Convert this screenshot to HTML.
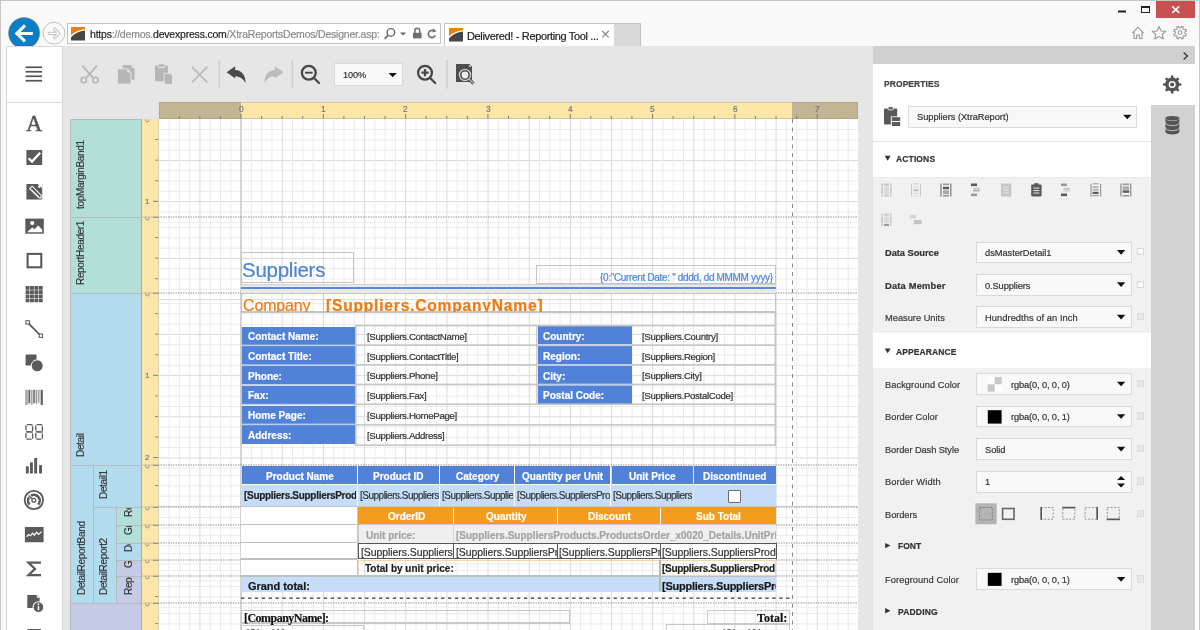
<!DOCTYPE html><html><head><meta charset="utf-8"><style>
*{margin:0;padding:0;box-sizing:border-box}
html,body{width:1200px;height:630px;overflow:hidden}
body{position:relative;background:#f9f9f9;font-family:"Liberation Sans",sans-serif;color:#333}
.a{position:absolute}
.t{white-space:pre;will-change:transform;-webkit-text-stroke:0.2px currentColor}
svg{position:absolute;overflow:visible}
</style></head><body>
<div class="a" style="left:0px;top:0px;width:1200px;height:1px;background:#c6c6c6;"></div>
<div class="a" style="left:0px;top:0px;width:1px;height:630px;background:#c6c6c6;"></div>
<div class="a" style="left:1156px;top:1px;width:39px;height:17px;background:#c75050;"></div>
<svg width="1200" height="50" style="left:0;top:0"><path d="M1172.3,6.3 L1179.2,12.9 M1179.2,6.3 L1172.3,12.9" stroke="#fff" stroke-width="1.6"/><rect x="1118" y="10.5" width="8" height="2" fill="#222"/><rect x="1141.5" y="6.5" width="8" height="6" fill="none" stroke="#222" stroke-width="1"/><rect x="1141" y="6" width="9" height="2" fill="#222"/><path d="M1132.5,33 L1138,27.2 L1143.5,33 M1134,31.8 V38.5 H1136.6 V35 H1139.4 V38.5 H1142 V31.8" fill="none" stroke="#9a9a9a" stroke-width="1.1"/><path d="M1159,26.6 L1161,31 L1165.8,31.4 L1162.2,34.5 L1163.3,39 L1159,36.6 L1154.7,39 L1155.8,34.5 L1152.2,31.4 L1157,31 Z" fill="none" stroke="#9a9a9a" stroke-width="1.1" stroke-linejoin="round"/><circle cx="1180.1" cy="32.6" r="1.9" fill="none" stroke="#9a9a9a" stroke-width="1.1"/><path d="M1184.70,32.60 L1185.02,33.51 L1186.52,34.14 L1185.73,36.05 L1184.22,35.43 L1183.35,35.85 L1183.35,35.85 L1182.93,36.72 L1183.55,38.23 L1181.64,39.02 L1181.01,37.52 L1180.10,37.20 L1180.10,37.20 L1179.19,37.52 L1178.56,39.02 L1176.65,38.23 L1177.27,36.72 L1176.85,35.85 L1176.85,35.85 L1175.98,35.43 L1174.47,36.05 L1173.68,34.14 L1175.18,33.51 L1175.50,32.60 L1175.50,32.60 L1175.18,31.69 L1173.68,31.06 L1174.47,29.15 L1175.98,29.77 L1176.85,29.35 L1176.85,29.35 L1177.27,28.48 L1176.65,26.97 L1178.56,26.18 L1179.19,27.68 L1180.10,28.00 L1180.10,28.00 L1181.01,27.68 L1181.64,26.18 L1183.55,26.97 L1182.93,28.48 L1183.35,29.35 L1183.35,29.35 L1184.22,29.77 L1185.73,29.15 L1186.52,31.06 L1185.02,31.69 L1184.70,32.60 Z" fill="none" stroke="#9a9a9a" stroke-width="1.05" stroke-linejoin="round"/><circle cx="24.1" cy="33.1" r="15.7" fill="#0a7fc6" stroke="#b08a70" stroke-width="0.5"/><path d="M16.5,33.4 H32.8 M25,25.4 L16.8,33.4 L25,41.4" fill="none" stroke="#fff" stroke-width="3"/><circle cx="54" cy="33.2" r="10.9" fill="#fbfbfb" stroke="#c2c2c2" stroke-width="1"/><path d="M49.2,33.3 H58.6 M54.6,29 L58.9,33.3 L54.6,37.6" fill="none" stroke="#c2c2c2" stroke-width="3.2" stroke-linecap="round" stroke-linejoin="round"/><path d="M49.2,33.3 H58.6 M54.6,29 L58.9,33.3 L54.6,37.6" fill="none" stroke="#fbfbfb" stroke-width="1.2" stroke-linecap="round" stroke-linejoin="round"/></svg>
<div class="a" style="left:67px;top:23px;width:374px;height:21px;background:#fff;border:1px solid #c3c3c3"></div>
<svg width="14" height="14" style="left:71px;top:26.5px" viewBox="0 0 14 14"><path d="M0,0 H14 V2.3 Q5,3.3 0,8.3 Z" fill="#f07d16"/><path d="M0,13.4 V10.2 Q5,4.6 14,3.4 V13.4 Z" fill="#474747"/></svg>
<span class="a t" style="left:89.70px;top:29.21px;font-family:'Liberation Sans',sans-serif;font-size:10.5px;line-height:10.5px;font-weight:normal;color:#222;letter-spacing:-0.207px;"><span style="color:#1e1e1e">https</span><span style="color:#8a8a8a">://demos.</span><span style="color:#1e1e1e">devexpress.com</span><span style="color:#8a8a8a">/XtraReportsDemos/Designer.asp:</span></span>
<svg width="1200" height="50" style="left:0;top:0"><circle cx="390.9" cy="32.4" r="3.8" fill="none" stroke="#6a6a6a" stroke-width="1.4"/><path d="M388.2,35.2 L384.6,38.8" stroke="#6a6a6a" stroke-width="1.7"/><path d="M400,32.4 H406.2 L403.1,35.5 Z" fill="#6a6a6a"/><rect x="413" y="32.8" width="8.6" height="5.6" fill="#6f6f6f"/><path d="M414.9,33 V30.6 A2.4,2.4 0 0 1 419.7,30.6 V33" fill="none" stroke="#6f6f6f" stroke-width="1.5"/><path d="M434.6,31.6 A3.6,3.6 0 1 0 435.2,35.4" fill="none" stroke="#6f6f6f" stroke-width="1.6"/><path d="M433,28.2 L436.6,31.2 L432.6,32.6 Z" fill="#6f6f6f"/></svg>
<div class="a" style="left:444px;top:23px;width:171px;height:24px;background:#fff;border:1px solid #c3c3c3;border-bottom:none"></div>
<div class="a" style="left:614px;top:23px;width:27px;height:23px;background:#d9d9d9;border:1px solid #c3c3c3;border-bottom:none;border-left:none"></div>
<svg width="14" height="14" style="left:449px;top:27.8px" viewBox="0 0 14 14"><path d="M0,0 H14 V2.3 Q5,3.3 0,8.3 Z" fill="#f07d16"/><path d="M0,13.4 V10.2 Q5,4.6 14,3.4 V13.4 Z" fill="#474747"/></svg>
<span class="a t" style="left:467.00px;top:30.79px;font-family:'Liberation Sans',sans-serif;font-size:11px;line-height:11px;font-weight:normal;color:#222;letter-spacing:-0.347px;">Delivered! - Reporting Tool ...</span>
<svg width="1200" height="50" style="left:0;top:0"><path d="M602.3,31 L608.7,37.4 M608.7,31 L602.3,37.4" stroke="#8a8a8a" stroke-width="1.3"/></svg>
<div class="a" style="left:1px;top:46px;width:6px;height:584px;background:#f8f8f8;"></div>
<div class="a" style="left:6px;top:46px;width:57px;height:584px;background:#fff;border-left:1px solid #d6d6d6;border-top:1px solid #d6d6d6;border-right:1px solid #dadada"></div>
<div class="a" style="left:7px;top:102px;width:55px;height:1px;background:#d9d9d9;"></div>
<div class="a" style="left:63px;top:46px;width:810px;height:584px;background:#e6e6e6;"></div>
<svg width="70" height="630" style="left:0;top:0"><rect x="25.6" y="66.4" width="16.5" height="1.7" fill="#555"/><rect x="25.6" y="70.9" width="16.5" height="1.7" fill="#555"/><rect x="25.6" y="75.4" width="16.5" height="1.7" fill="#555"/><rect x="25.6" y="79.9" width="16.5" height="1.7" fill="#555"/><rect x="26.4" y="149.9" width="15.8" height="15" rx="0.6" fill="#5a5a5a"/><path d="M28.6,158.2 L32,161.6 L40.2,152.8" fill="none" stroke="#fff" stroke-width="2.3"/><rect x="26.4" y="184" width="15.8" height="15.6" rx="0.6" fill="#5a5a5a"/><path d="M29.6,188.6 L32.2,186.2 L41.2,195.4 L41,198 L38.6,197.6 Z" fill="none" stroke="#fff" stroke-width="1.1"/><path d="M31.6,189.6 L39.4,197.2" stroke="#fff" stroke-width="0.8"/><path d="M37.8,184 L42.2,184 L42.2,188.4 Z" fill="#fff"/><circle cx="39.2" cy="186.6" r="1.2" fill="#fff"/><rect x="25.3" y="218.6" width="18.5" height="15.1" fill="#5a5a5a"/><circle cx="32.2" cy="223" r="2.1" fill="#fff"/><path d="M27,232.3 L32.2,227.4 L34.6,229.2 L38.2,225.6 L42.2,229.8 V232.3 Z" fill="#fff"/><rect x="27.6" y="253.9" width="13.7" height="13.4" fill="none" stroke="#555" stroke-width="2"/><rect x="25.6" y="286.0" width="3.9" height="3.7" rx="0.3" fill="#5a5a5a"/><rect x="30.0" y="286.0" width="3.9" height="3.7" rx="0.3" fill="#5a5a5a"/><rect x="34.4" y="286.0" width="3.9" height="3.7" rx="0.3" fill="#5a5a5a"/><rect x="38.8" y="286.0" width="3.9" height="3.7" rx="0.3" fill="#5a5a5a"/><rect x="25.6" y="290.2" width="3.9" height="3.7" rx="0.3" fill="#5a5a5a"/><rect x="30.0" y="290.2" width="3.9" height="3.7" rx="0.3" fill="#5a5a5a"/><rect x="34.4" y="290.2" width="3.9" height="3.7" rx="0.3" fill="#5a5a5a"/><rect x="38.8" y="290.2" width="3.9" height="3.7" rx="0.3" fill="#5a5a5a"/><rect x="25.6" y="294.4" width="3.9" height="3.7" rx="0.3" fill="#5a5a5a"/><rect x="30.0" y="294.4" width="3.9" height="3.7" rx="0.3" fill="#5a5a5a"/><rect x="34.4" y="294.4" width="3.9" height="3.7" rx="0.3" fill="#5a5a5a"/><rect x="38.8" y="294.4" width="3.9" height="3.7" rx="0.3" fill="#5a5a5a"/><rect x="25.6" y="298.6" width="3.9" height="3.7" rx="0.3" fill="#5a5a5a"/><rect x="30.0" y="298.6" width="3.9" height="3.7" rx="0.3" fill="#5a5a5a"/><rect x="34.4" y="298.6" width="3.9" height="3.7" rx="0.3" fill="#5a5a5a"/><rect x="38.8" y="298.6" width="3.9" height="3.7" rx="0.3" fill="#5a5a5a"/><path d="M27.8,322.6 L40.6,335.6" stroke="#555" stroke-width="1.6"/><rect x="25.9" y="320.7" width="3.4" height="3.4" fill="#fff" stroke="#555" stroke-width="1"/><rect x="39.2" y="334" width="3.4" height="3.4" fill="#fff" stroke="#555" stroke-width="1"/><rect x="25.6" y="354.4" width="11" height="11" rx="0.6" fill="#5a5a5a"/><circle cx="37.2" cy="365.8" r="6" fill="#5a5a5a" stroke="#fff" stroke-width="1"/><rect x="25.2" y="389.8" width="2.6" height="15.2" fill="#a8a8a8"/><rect x="28.4" y="389.8" width="1.9" height="13.5" fill="#666"/><rect x="31" y="389.8" width="1.6" height="15" fill="#a8a8a8"/><rect x="33.2" y="389.8" width="1.7" height="13.5" fill="#777"/><rect x="35.6" y="389.8" width="1.7" height="14" fill="#999"/><rect x="38" y="389.8" width="1.6" height="13" fill="#a8a8a8"/><rect x="40.6" y="389.8" width="2.3" height="15.2" fill="#666"/><rect x="26.0" y="424.6" width="6.6" height="7.2" rx="1.6" fill="none" stroke="#5a5a5a" stroke-width="1.3" stroke-dasharray="5,0.8"/><rect x="26.0" y="431.8" width="6.6" height="7.4" rx="1.6" fill="none" stroke="#5a5a5a" stroke-width="1.3" stroke-dasharray="5,0.8"/><rect x="35.800000000000004" y="424.6" width="6.6" height="7.2" rx="1.6" fill="none" stroke="#5a5a5a" stroke-width="1.3" stroke-dasharray="5,0.8"/><rect x="35.800000000000004" y="431.8" width="6.6" height="7.4" rx="1.6" fill="none" stroke="#5a5a5a" stroke-width="1.3" stroke-dasharray="5,0.8"/><rect x="25.9" y="466.3" width="2.9" height="7.2" rx="0.4" fill="#5a5a5a"/><rect x="30" y="462.2" width="2.9" height="11.3" rx="0.4" fill="#5a5a5a"/><rect x="34.2" y="458" width="2.9" height="15.5" rx="0.4" fill="#5a5a5a"/><rect x="39.1" y="465" width="2.9" height="8.5" rx="0.4" fill="#5a5a5a"/><circle cx="33.9" cy="500" r="9.2" fill="none" stroke="#5a5a5a" stroke-width="1.8"/><path d="M29.6,504.6 A5.8,5.8 0 1 1 38.2,504.6" fill="none" stroke="#5a5a5a" stroke-width="2.6"/><path d="M33.8,500.2 L28.6,495" stroke="#fff" stroke-width="2.6"/><path d="M33.8,500.2 L29,495.4" stroke="#5a5a5a" stroke-width="1.4"/><circle cx="33.8" cy="500.2" r="1.9" fill="#fff" stroke="#5a5a5a" stroke-width="1.3"/><rect x="24.9" y="527" width="18.7" height="15.3" rx="0.6" fill="#5a5a5a"/><path d="M26.6,536.8 L28.6,534.6 L30.4,535.8 L32.6,533.2 L34.4,535.2 L36.6,532.2 L38.6,534.4 L41.6,531.6" fill="none" stroke="#fff" stroke-width="1.2"/><path d="M41,562.6 H28.4 L35,568.9 L28.4,575.1 H41" fill="none" stroke="#5a5a5a" stroke-width="2.2"/><path d="M27.3,595 H37 L39.6,597.6 V608.1 H27.3 Z" fill="#5a5a5a"/><path d="M36.8,595 L39.6,597.8 L36.8,597.8 Z" fill="#fff"/><circle cx="38.4" cy="607.2" r="5.4" fill="#5a5a5a" stroke="#fff" stroke-width="1.1"/><rect x="37.7" y="606" width="1.5" height="4.2" fill="#fff"/><circle cx="38.45" cy="604.2" r="0.9" fill="#fff"/><rect x="27.3" y="629" width="13.8" height="2" fill="#5a5a5a"/></svg>
<span class="a t" style="left:26.38px;top:112.96px;font-family:'Liberation Serif',sans-serif;font-size:22.5px;line-height:22.5px;font-weight:normal;color:#555;letter-spacing:0.000px;-webkit-text-stroke:0.5px #555">A</span>
<svg width="1200" height="120" style="left:0;top:0"><path d="M82.3,65.6 L92.8,77.6 M97,65.6 L86.5,77.6" stroke="#b6b6b6" stroke-width="1.7"/><circle cx="83.8" cy="80.1" r="2.7" fill="none" stroke="#b6b6b6" stroke-width="1.6"/><circle cx="95.5" cy="80.1" r="2.7" fill="none" stroke="#b6b6b6" stroke-width="1.6"/><path d="M122.5,65.1 H131.6 L134.6,68.1 V79.7 H122.5 Z" fill="#b6b6b6"/><path d="M117.4,68.8 H127.4 L131,72.4 V84 H117.4 Z" fill="#b6b6b6" stroke="#e6e6e6" stroke-width="0.9"/><path d="M127.3,69 V72.6 H130.9" fill="#e6e6e6"/><path d="M131.6,65.1 V68.1 H134.6" fill="#e6e6e6"/><rect x="155" y="65.6" width="12.9" height="15.7" rx="0.8" fill="#b6b6b6"/><rect x="158.2" y="63.8" width="6.4" height="3.4" rx="0.6" fill="#b6b6b6" stroke="#e6e6e6" stroke-width="0.8"/><path d="M158.4,67.6 H164.6" stroke="#e6e6e6" stroke-width="1"/><path d="M164.1,73.3 H170 L172.6,75.9 V84.3 H164.1 Z" fill="#b6b6b6" stroke="#e6e6e6" stroke-width="1"/><path d="M192.5,67.3 L206.8,81.8 M206.8,67.3 L192.5,81.8" stroke="#bcbcbc" stroke-width="1.9" stroke-linecap="round"/><rect x="218.5" y="60" width="1.6" height="28.7" fill="#cfcfcf"/><rect x="291.6" y="60" width="1.6" height="28.7" fill="#cfcfcf"/><rect x="446.2" y="60" width="1.6" height="28.7" fill="#cfcfcf"/><path d="M226.6,72.3 L235.2,66.2 V70 C241.8,70.4 245.6,75.2 245.6,83 C243.3,78.6 239.8,76.4 235.2,76.2 V78.6 Z" fill="#4a4a4a"/><path d="M283.4,72.3 L274.8,66.2 V70 C268.2,70.4 264.4,75.2 264.4,83 C266.7,78.6 270.2,76.4 274.8,76.2 V78.6 Z" fill="#bcbcbc"/><circle cx="308.8" cy="72.7" r="6.9" fill="none" stroke="#474747" stroke-width="2.3"/><path d="M305,72.7 H312.6" stroke="#474747" stroke-width="1.9"/><path d="M314.2,78.2 L319,83" stroke="#474747" stroke-width="2.3" stroke-linecap="round"/><circle cx="425" cy="72.7" r="6.9" fill="none" stroke="#474747" stroke-width="2.3"/><path d="M421.4,72.7 H428.6 M425,69.1 V76.3" stroke="#474747" stroke-width="2.2"/><path d="M430.4,78.2 L435.2,83" stroke="#474747" stroke-width="2.3" stroke-linecap="round"/><path d="M456,64 H470 L472,66 V82 H456 Z" fill="#4d4d4d"/><path d="M469.6,64 L472,66.4 V64 Z" fill="#e6e6e6"/><path d="M469.2,64.6 L471.4,66.8 H469.2 Z" fill="#fff"/><circle cx="465" cy="75" r="5.6" fill="#4d4d4d" stroke="#cfcfcf" stroke-width="1.3"/><circle cx="465" cy="75" r="3.4" fill="#eeeeee"/><path d="M469.2,79.2 L473.6,83.6" stroke="#4d4d4d" stroke-width="3"/><path d="M469.2,79.2 L473.6,83.6" stroke="#cfcfcf" stroke-width="1.1"/></svg>
<div class="a" style="left:334px;top:63px;width:69px;height:23px;background:#f8f8f8;border:1px solid #d9d9d9"></div>
<span class="a t" style="left:343.40px;top:71.21px;font-family:'Liberation Sans',sans-serif;font-size:9.2px;line-height:9.2px;font-weight:normal;color:#333;letter-spacing:-0.150px;">100%</span>
<svg width="1200" height="120" style="left:0;top:0"><path d="M388.6,73.1 H396.8 L392.7,77.3 Z" fill="#111"/></svg>
<div class="a" style="left:159px;top:102px;width:699px;height:17px;background:#fde6a8;border-top:1px solid #d9c9a0;border-bottom:1px solid #d2c49c"></div>
<div class="a" style="left:159px;top:102px;width:82px;height:17px;background:#c2b596;border-top:1px solid #b5a682;border-bottom:1px solid #b5a682;border-left:1px solid #b5a682"></div>
<div class="a" style="left:792px;top:102px;width:66px;height:17px;background:#c2b596;border-top:1px solid #b5a682;border-bottom:1px solid #b5a682;border-right:1px solid #b5a682"></div>
<svg width="1200" height="630" style="left:0;top:0"><rect x="178.77" y="116" width="1" height="2.6" fill="#7a7a7a"/><rect x="199.34" y="116" width="1" height="2.6" fill="#7a7a7a"/><rect x="219.92" y="116" width="1" height="2.6" fill="#7a7a7a"/><rect x="240.50" y="114" width="1" height="4.6" fill="#7a7a7a"/><rect x="261.08" y="116" width="1" height="2.6" fill="#7a7a7a"/><rect x="281.65" y="116" width="1" height="2.6" fill="#7a7a7a"/><rect x="302.23" y="116" width="1" height="2.6" fill="#7a7a7a"/><rect x="322.81" y="114" width="1" height="4.6" fill="#7a7a7a"/><rect x="343.39" y="116" width="1" height="2.6" fill="#7a7a7a"/><rect x="363.97" y="116" width="1" height="2.6" fill="#7a7a7a"/><rect x="384.54" y="116" width="1" height="2.6" fill="#7a7a7a"/><rect x="405.12" y="114" width="1" height="4.6" fill="#7a7a7a"/><rect x="425.70" y="116" width="1" height="2.6" fill="#7a7a7a"/><rect x="446.27" y="116" width="1" height="2.6" fill="#7a7a7a"/><rect x="466.85" y="116" width="1" height="2.6" fill="#7a7a7a"/><rect x="487.43" y="114" width="1" height="4.6" fill="#7a7a7a"/><rect x="508.01" y="116" width="1" height="2.6" fill="#7a7a7a"/><rect x="528.59" y="116" width="1" height="2.6" fill="#7a7a7a"/><rect x="549.16" y="116" width="1" height="2.6" fill="#7a7a7a"/><rect x="569.74" y="114" width="1" height="4.6" fill="#7a7a7a"/><rect x="590.32" y="116" width="1" height="2.6" fill="#7a7a7a"/><rect x="610.89" y="116" width="1" height="2.6" fill="#7a7a7a"/><rect x="631.47" y="116" width="1" height="2.6" fill="#7a7a7a"/><rect x="652.05" y="114" width="1" height="4.6" fill="#7a7a7a"/><rect x="672.63" y="116" width="1" height="2.6" fill="#7a7a7a"/><rect x="693.21" y="116" width="1" height="2.6" fill="#7a7a7a"/><rect x="713.78" y="116" width="1" height="2.6" fill="#7a7a7a"/><rect x="734.36" y="114" width="1" height="4.6" fill="#7a7a7a"/><rect x="754.94" y="116" width="1" height="2.6" fill="#7a7a7a"/><rect x="775.51" y="116" width="1" height="2.6" fill="#7a7a7a"/><rect x="796.09" y="116" width="1" height="2.6" fill="#7a7a7a"/><rect x="816.67" y="114" width="1" height="4.6" fill="#7a7a7a"/></svg>
<span class="a t" style="left:238.66px;top:105.49px;font-family:'Liberation Sans',sans-serif;font-size:8.4px;line-height:8.4px;font-weight:normal;color:#777;letter-spacing:0.000px;">0</span>
<span class="a t" style="left:320.97px;top:105.49px;font-family:'Liberation Sans',sans-serif;font-size:8.4px;line-height:8.4px;font-weight:normal;color:#777;letter-spacing:0.000px;">1</span>
<span class="a t" style="left:403.28px;top:105.49px;font-family:'Liberation Sans',sans-serif;font-size:8.4px;line-height:8.4px;font-weight:normal;color:#777;letter-spacing:0.000px;">2</span>
<span class="a t" style="left:485.59px;top:105.49px;font-family:'Liberation Sans',sans-serif;font-size:8.4px;line-height:8.4px;font-weight:normal;color:#777;letter-spacing:0.000px;">3</span>
<span class="a t" style="left:567.90px;top:105.49px;font-family:'Liberation Sans',sans-serif;font-size:8.4px;line-height:8.4px;font-weight:normal;color:#777;letter-spacing:0.000px;">4</span>
<span class="a t" style="left:650.21px;top:105.49px;font-family:'Liberation Sans',sans-serif;font-size:8.4px;line-height:8.4px;font-weight:normal;color:#777;letter-spacing:0.000px;">5</span>
<span class="a t" style="left:732.52px;top:105.49px;font-family:'Liberation Sans',sans-serif;font-size:8.4px;line-height:8.4px;font-weight:normal;color:#777;letter-spacing:0.000px;">6</span>
<span class="a t" style="left:814.83px;top:105.49px;font-family:'Liberation Sans',sans-serif;font-size:8.4px;line-height:8.4px;font-weight:normal;color:#777;letter-spacing:0.000px;">7</span>
<div class="a" style="left:70px;top:119px;width:72px;height:99px;background:#b3dfd9;border:1px solid #b4bcc0"></div>
<div class="a" style="left:70px;top:217px;width:72px;height:77px;background:#b3dfd9;border:1px solid #b4bcc0"></div>
<div class="a" style="left:70px;top:293px;width:72px;height:173px;background:#b3dbee;border:1px solid #b4bcc0"></div>
<div class="a" style="left:70px;top:465px;width:24px;height:139px;background:#b3dbee;border:1px solid #b4bcc0"></div>
<div class="a" style="left:93px;top:465px;width:49px;height:43px;background:#b3dbee;border:1px solid #b4bcc0"></div>
<div class="a" style="left:93px;top:507px;width:24px;height:97px;background:#b3dbee;border:1px solid #b4bcc0"></div>
<div class="a" style="left:116px;top:507px;width:26px;height:19px;background:#b3dfd9;border:1px solid #b4bcc0"></div>
<div class="a" style="left:116px;top:525px;width:26px;height:19px;background:#b3dfd9;border:1px solid #b4bcc0"></div>
<div class="a" style="left:116px;top:543px;width:26px;height:18px;background:#b3dbee;border:1px solid #b4bcc0"></div>
<div class="a" style="left:116px;top:560px;width:26px;height:17px;background:#c5cae7;border:1px solid #b4bcc0"></div>
<div class="a" style="left:116px;top:576px;width:26px;height:28px;background:#c5cae7;border:1px solid #b4bcc0"></div>
<div class="a" style="left:70px;top:603px;width:72px;height:38px;background:#c5cae7;border:1px solid #b4bcc0"></div>
<div class="a" style="left:141px;top:119px;width:18px;height:511px;background:#fde6a8;border-left:1px solid #b3aa96;border-right:1px solid #d0c8b0"></div>
<svg width="1200" height="630" style="left:0;top:0"><rect x="155.3" y="139.08" width="2.8" height="1" fill="#7a7a7a"/><rect x="155.3" y="159.66" width="2.8" height="1" fill="#7a7a7a"/><rect x="155.3" y="180.23" width="2.8" height="1" fill="#7a7a7a"/><rect x="153.2" y="200.81" width="5" height="1" fill="#7a7a7a"/><path d="M145.6,119.3 v0.9 a1.7,1.7 0 0 0 3.4,0 v-0.9" fill="none" stroke="#888" stroke-width="0.9"/><rect x="141" y="216.5" width="17" height="1" fill="#c9bd9c"/><rect x="153" y="216.8" width="5.5" height="1" fill="#8a8a8a"/><rect x="155.3" y="237.08" width="2.8" height="1" fill="#7a7a7a"/><rect x="155.3" y="257.65" width="2.8" height="1" fill="#7a7a7a"/><rect x="155.3" y="278.23" width="2.8" height="1" fill="#7a7a7a"/><path d="M145.6,217.3 v0.9 a1.7,1.7 0 0 0 3.4,0 v-0.9" fill="none" stroke="#888" stroke-width="0.9"/><rect x="141" y="292.5" width="17" height="1" fill="#c9bd9c"/><rect x="153" y="292.8" width="5.5" height="1" fill="#8a8a8a"/><rect x="155.3" y="313.08" width="2.8" height="1" fill="#7a7a7a"/><rect x="155.3" y="333.65" width="2.8" height="1" fill="#7a7a7a"/><rect x="155.3" y="354.23" width="2.8" height="1" fill="#7a7a7a"/><rect x="153.2" y="374.81" width="5" height="1" fill="#7a7a7a"/><rect x="155.3" y="395.39" width="2.8" height="1" fill="#7a7a7a"/><rect x="155.3" y="415.97" width="2.8" height="1" fill="#7a7a7a"/><rect x="155.3" y="436.54" width="2.8" height="1" fill="#7a7a7a"/><rect x="153.2" y="457.12" width="5" height="1" fill="#7a7a7a"/><path d="M145.6,293.3 v0.9 a1.7,1.7 0 0 0 3.4,0 v-0.9" fill="none" stroke="#888" stroke-width="0.9"/><rect x="141" y="464.5" width="17" height="1" fill="#c9bd9c"/><rect x="153" y="464.8" width="5.5" height="1" fill="#8a8a8a"/><rect x="155.3" y="485.08" width="2.8" height="1" fill="#7a7a7a"/><path d="M145.6,465.3 v0.9 a1.7,1.7 0 0 0 3.4,0 v-0.9" fill="none" stroke="#888" stroke-width="0.9"/><rect x="141" y="506.5" width="17" height="1" fill="#c9bd9c"/><rect x="153" y="506.8" width="5.5" height="1" fill="#8a8a8a"/><path d="M145.6,507.3 v0.9 a1.7,1.7 0 0 0 3.4,0 v-0.9" fill="none" stroke="#888" stroke-width="0.9"/><rect x="141" y="524.5" width="17" height="1" fill="#c9bd9c"/><rect x="153" y="524.8" width="5.5" height="1" fill="#8a8a8a"/><path d="M145.6,525.3 v0.9 a1.7,1.7 0 0 0 3.4,0 v-0.9" fill="none" stroke="#888" stroke-width="0.9"/><rect x="141" y="542.5" width="17" height="1" fill="#c9bd9c"/><rect x="153" y="542.8" width="5.5" height="1" fill="#8a8a8a"/><path d="M145.6,543.3 v0.9 a1.7,1.7 0 0 0 3.4,0 v-0.9" fill="none" stroke="#888" stroke-width="0.9"/><rect x="141" y="559.5" width="17" height="1" fill="#c9bd9c"/><rect x="153" y="559.8" width="5.5" height="1" fill="#8a8a8a"/><path d="M145.6,560.3 v0.9 a1.7,1.7 0 0 0 3.4,0 v-0.9" fill="none" stroke="#888" stroke-width="0.9"/><rect x="141" y="575.5" width="17" height="1" fill="#c9bd9c"/><rect x="153" y="575.8" width="5.5" height="1" fill="#8a8a8a"/><rect x="155.3" y="596.08" width="2.8" height="1" fill="#7a7a7a"/><path d="M145.6,576.3 v0.9 a1.7,1.7 0 0 0 3.4,0 v-0.9" fill="none" stroke="#888" stroke-width="0.9"/><rect x="141" y="602.5" width="17" height="1" fill="#c9bd9c"/><rect x="153" y="602.8" width="5.5" height="1" fill="#8a8a8a"/><rect x="155.3" y="623.08" width="2.8" height="1" fill="#7a7a7a"/><path d="M145.6,603.3 v0.9 a1.7,1.7 0 0 0 3.4,0 v-0.9" fill="none" stroke="#888" stroke-width="0.9"/></svg>
<span class="a t" style="left:144.77px;top:197.74px;font-family:'Liberation Sans',sans-serif;font-size:8px;line-height:8px;font-weight:normal;color:#777;letter-spacing:0.000px;">1</span>
<span class="a t" style="left:144.77px;top:371.74px;font-family:'Liberation Sans',sans-serif;font-size:8px;line-height:8px;font-weight:normal;color:#777;letter-spacing:0.000px;">1</span>
<span class="a t" style="left:144.77px;top:454.05px;font-family:'Liberation Sans',sans-serif;font-size:8px;line-height:8px;font-weight:normal;color:#777;letter-spacing:0.000px;">2</span>
<div class="a" style="left:158px;top:119px;width:700px;height:511px;background:#fff;"></div>
<div class="a" style="left:158px;top:119px;width:1px;height:511px;background:#d9cfb4;"></div>
<svg width="1200" height="630" style="left:0;top:0"><rect x="158" y="129.09" width="700" height="1" fill="#ebebeb"/><rect x="158" y="139.38" width="700" height="1" fill="#ebebeb"/><rect x="158" y="149.67" width="700" height="1" fill="#ebebeb"/><rect x="158" y="159.96" width="700" height="1" fill="#dadada"/><rect x="158" y="170.24" width="700" height="1" fill="#ebebeb"/><rect x="158" y="180.53" width="700" height="1" fill="#ebebeb"/><rect x="158" y="190.82" width="700" height="1" fill="#ebebeb"/><rect x="158" y="201.11" width="700" height="1" fill="#dadada"/><rect x="158" y="211.40" width="700" height="1" fill="#ebebeb"/><rect x="158" y="221.69" width="700" height="1" fill="#ebebeb"/><rect x="158" y="227.09" width="700" height="1" fill="#ebebeb"/><rect x="158" y="237.38" width="700" height="1" fill="#ebebeb"/><rect x="158" y="247.67" width="700" height="1" fill="#ebebeb"/><rect x="158" y="257.95" width="700" height="1" fill="#dadada"/><rect x="158" y="268.24" width="700" height="1" fill="#ebebeb"/><rect x="158" y="278.53" width="700" height="1" fill="#ebebeb"/><rect x="158" y="288.82" width="700" height="1" fill="#ebebeb"/><rect x="158" y="299.11" width="700" height="1" fill="#dadada"/><rect x="158" y="303.09" width="700" height="1" fill="#ebebeb"/><rect x="158" y="313.38" width="700" height="1" fill="#ebebeb"/><rect x="158" y="323.67" width="700" height="1" fill="#ebebeb"/><rect x="158" y="333.95" width="700" height="1" fill="#dadada"/><rect x="158" y="344.24" width="700" height="1" fill="#ebebeb"/><rect x="158" y="354.53" width="700" height="1" fill="#ebebeb"/><rect x="158" y="364.82" width="700" height="1" fill="#ebebeb"/><rect x="158" y="375.11" width="700" height="1" fill="#dadada"/><rect x="158" y="385.40" width="700" height="1" fill="#ebebeb"/><rect x="158" y="395.69" width="700" height="1" fill="#ebebeb"/><rect x="158" y="405.98" width="700" height="1" fill="#ebebeb"/><rect x="158" y="416.27" width="700" height="1" fill="#dadada"/><rect x="158" y="426.55" width="700" height="1" fill="#ebebeb"/><rect x="158" y="436.84" width="700" height="1" fill="#ebebeb"/><rect x="158" y="447.13" width="700" height="1" fill="#ebebeb"/><rect x="158" y="457.42" width="700" height="1" fill="#dadada"/><rect x="158" y="467.71" width="700" height="1" fill="#ebebeb"/><rect x="158" y="475.09" width="700" height="1" fill="#ebebeb"/><rect x="158" y="485.38" width="700" height="1" fill="#ebebeb"/><rect x="158" y="495.67" width="700" height="1" fill="#ebebeb"/><rect x="158" y="505.95" width="700" height="1" fill="#dadada"/><rect x="158" y="517.09" width="700" height="1" fill="#ebebeb"/><rect x="158" y="527.38" width="700" height="1" fill="#ebebeb"/><rect x="158" y="535.09" width="700" height="1" fill="#ebebeb"/><rect x="158" y="545.38" width="700" height="1" fill="#ebebeb"/><rect x="158" y="553.09" width="700" height="1" fill="#ebebeb"/><rect x="158" y="563.38" width="700" height="1" fill="#ebebeb"/><rect x="158" y="570.09" width="700" height="1" fill="#ebebeb"/><rect x="158" y="580.38" width="700" height="1" fill="#ebebeb"/><rect x="158" y="586.09" width="700" height="1" fill="#ebebeb"/><rect x="158" y="596.38" width="700" height="1" fill="#ebebeb"/><rect x="158" y="606.67" width="700" height="1" fill="#ebebeb"/><rect x="158" y="613.09" width="700" height="1" fill="#ebebeb"/><rect x="158" y="623.38" width="700" height="1" fill="#ebebeb"/><rect x="168.58" y="119" width="1" height="511" fill="#ebebeb"/><rect x="178.87" y="119" width="1" height="511" fill="#ebebeb"/><rect x="189.16" y="119" width="1" height="511" fill="#ebebeb"/><rect x="199.44" y="119" width="1" height="511" fill="#dadada"/><rect x="209.73" y="119" width="1" height="511" fill="#ebebeb"/><rect x="220.02" y="119" width="1" height="511" fill="#ebebeb"/><rect x="230.31" y="119" width="1" height="511" fill="#ebebeb"/><rect x="240.60" y="119" width="1" height="511" fill="#dadada"/><rect x="250.89" y="119" width="1" height="511" fill="#ebebeb"/><rect x="261.18" y="119" width="1" height="511" fill="#ebebeb"/><rect x="271.47" y="119" width="1" height="511" fill="#ebebeb"/><rect x="281.75" y="119" width="1" height="511" fill="#dadada"/><rect x="292.04" y="119" width="1" height="511" fill="#ebebeb"/><rect x="302.33" y="119" width="1" height="511" fill="#ebebeb"/><rect x="312.62" y="119" width="1" height="511" fill="#ebebeb"/><rect x="322.91" y="119" width="1" height="511" fill="#dadada"/><rect x="333.20" y="119" width="1" height="511" fill="#ebebeb"/><rect x="343.49" y="119" width="1" height="511" fill="#ebebeb"/><rect x="353.78" y="119" width="1" height="511" fill="#ebebeb"/><rect x="364.07" y="119" width="1" height="511" fill="#dadada"/><rect x="374.35" y="119" width="1" height="511" fill="#ebebeb"/><rect x="384.64" y="119" width="1" height="511" fill="#ebebeb"/><rect x="394.93" y="119" width="1" height="511" fill="#ebebeb"/><rect x="405.22" y="119" width="1" height="511" fill="#dadada"/><rect x="415.51" y="119" width="1" height="511" fill="#ebebeb"/><rect x="425.80" y="119" width="1" height="511" fill="#ebebeb"/><rect x="436.09" y="119" width="1" height="511" fill="#ebebeb"/><rect x="446.38" y="119" width="1" height="511" fill="#dadada"/><rect x="456.66" y="119" width="1" height="511" fill="#ebebeb"/><rect x="466.95" y="119" width="1" height="511" fill="#ebebeb"/><rect x="477.24" y="119" width="1" height="511" fill="#ebebeb"/><rect x="487.53" y="119" width="1" height="511" fill="#dadada"/><rect x="497.82" y="119" width="1" height="511" fill="#ebebeb"/><rect x="508.11" y="119" width="1" height="511" fill="#ebebeb"/><rect x="518.40" y="119" width="1" height="511" fill="#ebebeb"/><rect x="528.69" y="119" width="1" height="511" fill="#dadada"/><rect x="538.97" y="119" width="1" height="511" fill="#ebebeb"/><rect x="549.26" y="119" width="1" height="511" fill="#ebebeb"/><rect x="559.55" y="119" width="1" height="511" fill="#ebebeb"/><rect x="569.84" y="119" width="1" height="511" fill="#dadada"/><rect x="580.13" y="119" width="1" height="511" fill="#ebebeb"/><rect x="590.42" y="119" width="1" height="511" fill="#ebebeb"/><rect x="600.71" y="119" width="1" height="511" fill="#ebebeb"/><rect x="611.00" y="119" width="1" height="511" fill="#dadada"/><rect x="621.28" y="119" width="1" height="511" fill="#ebebeb"/><rect x="631.57" y="119" width="1" height="511" fill="#ebebeb"/><rect x="641.86" y="119" width="1" height="511" fill="#ebebeb"/><rect x="652.15" y="119" width="1" height="511" fill="#dadada"/><rect x="662.44" y="119" width="1" height="511" fill="#ebebeb"/><rect x="672.73" y="119" width="1" height="511" fill="#ebebeb"/><rect x="683.02" y="119" width="1" height="511" fill="#ebebeb"/><rect x="693.31" y="119" width="1" height="511" fill="#dadada"/><rect x="703.59" y="119" width="1" height="511" fill="#ebebeb"/><rect x="713.88" y="119" width="1" height="511" fill="#ebebeb"/><rect x="724.17" y="119" width="1" height="511" fill="#ebebeb"/><rect x="734.46" y="119" width="1" height="511" fill="#dadada"/><rect x="744.75" y="119" width="1" height="511" fill="#ebebeb"/><rect x="755.04" y="119" width="1" height="511" fill="#ebebeb"/><rect x="765.33" y="119" width="1" height="511" fill="#ebebeb"/><rect x="775.62" y="119" width="1" height="511" fill="#dadada"/><rect x="785.90" y="119" width="1" height="511" fill="#ebebeb"/><rect x="796.19" y="119" width="1" height="511" fill="#ebebeb"/><rect x="806.48" y="119" width="1" height="511" fill="#ebebeb"/><rect x="816.77" y="119" width="1" height="511" fill="#dadada"/><rect x="827.06" y="119" width="1" height="511" fill="#ebebeb"/><rect x="837.35" y="119" width="1" height="511" fill="#ebebeb"/><rect x="847.64" y="119" width="1" height="511" fill="#ebebeb"/><rect x="240.3" y="119" width="1.2" height="511" fill="#c8c8c8"/><path d="M792.5,119 V630" stroke="#8a8a8a" stroke-width="1" stroke-dasharray="4,4.5"/><path d="M158,217 H858" stroke="#8e8e8e" stroke-width="1" stroke-dasharray="1.4,1.1"/><path d="M158,293 H858" stroke="#8e8e8e" stroke-width="1" stroke-dasharray="1.4,1.1"/><path d="M158,465 H858" stroke="#8e8e8e" stroke-width="1" stroke-dasharray="1.4,1.1"/><path d="M158,507 H241 M776,507 H858" stroke="#8e8e8e" stroke-width="1" stroke-dasharray="1.4,1.1"/><path d="M158,525 H241 M776,525 H858" stroke="#8e8e8e" stroke-width="1" stroke-dasharray="1.4,1.1"/><path d="M158,543 H241 M776,543 H858" stroke="#8e8e8e" stroke-width="1" stroke-dasharray="1.4,1.1"/><path d="M158,560 H241 M776,560 H858" stroke="#8e8e8e" stroke-width="1" stroke-dasharray="1.4,1.1"/><path d="M158,576 H241 M776,576 H858" stroke="#8e8e8e" stroke-width="1" stroke-dasharray="1.4,1.1"/><path d="M158,603 H858" stroke="#8e8e8e" stroke-width="1" stroke-dasharray="1.4,1.1"/></svg>
<div class="a" style="left:71px;top:120px;width:70px;height:97px;overflow:hidden"><span class="a t" style="left:5.40px;top:89.00px;font-size:10px;line-height:10px;color:#333;letter-spacing:-0.33px;transform:rotate(-90deg);transform-origin:0 0">topMarginBand1</span></div>
<div class="a" style="left:71px;top:218px;width:70px;height:75px;overflow:hidden"><span class="a t" style="left:5.00px;top:67.00px;font-size:10px;line-height:10px;color:#333;letter-spacing:-0.33px;transform:rotate(-90deg);transform-origin:0 0">ReportHeader1</span></div>
<div class="a" style="left:71px;top:294px;width:70px;height:171px;overflow:hidden"><span class="a t" style="left:5.00px;top:163.00px;font-size:10px;line-height:10px;color:#333;letter-spacing:-0.33px;transform:rotate(-90deg);transform-origin:0 0">Detail</span></div>
<div class="a" style="left:71px;top:466px;width:22px;height:137px;overflow:hidden"><span class="a t" style="left:5.80px;top:129.00px;font-size:10px;line-height:10px;color:#333;letter-spacing:-0.33px;transform:rotate(-90deg);transform-origin:0 0">DetailReportBand</span></div>
<div class="a" style="left:94px;top:466px;width:47px;height:41px;overflow:hidden"><span class="a t" style="left:5.20px;top:33.00px;font-size:10px;line-height:10px;color:#333;letter-spacing:-0.33px;transform:rotate(-90deg);transform-origin:0 0">Detail1</span></div>
<div class="a" style="left:94px;top:508px;width:22px;height:95px;overflow:hidden"><span class="a t" style="left:5.20px;top:87.00px;font-size:10px;line-height:10px;color:#333;letter-spacing:-0.33px;transform:rotate(-90deg);transform-origin:0 0">DetailReport2</span></div>
<div class="a" style="left:117px;top:508px;width:24px;height:17px;overflow:hidden"><span class="a t" style="left:6.60px;top:9.00px;font-size:10px;line-height:10px;color:#333;letter-spacing:-0.33px;transform:rotate(-90deg);transform-origin:0 0">ReportHeader</span></div>
<div class="a" style="left:117px;top:526px;width:24px;height:17px;overflow:hidden"><span class="a t" style="left:6.60px;top:9.00px;font-size:10px;line-height:10px;color:#333;letter-spacing:-0.33px;transform:rotate(-90deg);transform-origin:0 0">GroupHeader</span></div>
<div class="a" style="left:117px;top:544px;width:24px;height:16px;overflow:hidden"><span class="a t" style="left:6.60px;top:8.00px;font-size:10px;line-height:10px;color:#333;letter-spacing:-0.33px;transform:rotate(-90deg);transform-origin:0 0">Detail</span></div>
<div class="a" style="left:117px;top:561px;width:24px;height:15px;overflow:hidden"><span class="a t" style="left:6.60px;top:7.00px;font-size:10px;line-height:10px;color:#333;letter-spacing:-0.33px;transform:rotate(-90deg);transform-origin:0 0">GroupFooter</span></div>
<div class="a" style="left:117px;top:577px;width:24px;height:26px;overflow:hidden"><span class="a t" style="left:6.60px;top:18.00px;font-size:10px;line-height:10px;color:#333;letter-spacing:-0.33px;transform:rotate(-90deg);transform-origin:0 0">ReportFooter</span></div>
<div class="a" style="left:241px;top:252px;width:113px;height:31px;background:transparent;border:1px solid #c4c4c4"></div>
<span class="a t" style="left:242.30px;top:260.45px;font-family:'Liberation Sans',sans-serif;font-size:20.5px;line-height:20.5px;font-weight:normal;color:#4d84d6;letter-spacing:-0.252px;">Suppliers</span>
<div class="a" style="left:536px;top:265px;width:240px;height:19px;background:transparent;border:1px solid #c4c4c4"></div>
<span class="a t" style="right:426.80px;top:272.74px;font-family:'Liberation Sans',sans-serif;font-size:10px;line-height:10px;font-weight:normal;color:#4d84d6;letter-spacing:-0.326px;">{0:&quot;Current Date: &quot; dddd, dd MMMM yyyy}</span>
<div class="a" style="left:241px;top:284px;width:535px;height:9px;background:#e9e9e9;border-top:1px solid #d0d0d0"></div>
<div class="a" style="left:241px;top:287px;width:535px;height:2px;background:#5b8bd8;"></div>
<div class="a" style="left:241px;top:293px;width:535px;height:20px;background:transparent;border:1px solid #c4c4c4;border-bottom:2px solid #c4c4c4"></div>
<div class="a" style="left:322.5px;top:293px;width:1.5px;height:20px;background:#c4c4c4;"></div>
<div class="a" style="left:241px;top:293px;width:535px;height:19.2px;overflow:hidden">
<span class="a t" style="left:1.70px;top:4.66px;font-family:'Liberation Sans',sans-serif;font-size:16px;line-height:16px;font-weight:normal;color:#f27b0c;letter-spacing:-0.155px;">Company</span>
<span class="a t" style="left:85.10px;top:4.89px;font-family:'Liberation Sans',sans-serif;font-size:15.6px;line-height:15.6px;font-weight:bold;color:#f27b0c;letter-spacing:0.787px;">[Suppliers.CompanyName]</span>
</div>
<div class="a" style="left:241.5px;top:326.5px;width:114px;height:18.3px;background:#5182d8;"></div>
<div class="a" style="left:241.5px;top:346.3px;width:114px;height:18.3px;background:#5182d8;"></div>
<div class="a" style="left:241.5px;top:366.0px;width:114px;height:18.3px;background:#5182d8;"></div>
<div class="a" style="left:241.5px;top:385.8px;width:114px;height:18.3px;background:#5182d8;"></div>
<div class="a" style="left:241.5px;top:405.5px;width:114px;height:18.3px;background:#5182d8;"></div>
<div class="a" style="left:241.5px;top:425.3px;width:114px;height:18.3px;background:#5182d8;"></div>
<div class="a" style="left:537.5px;top:326px;width:94px;height:18.3px;background:#5182d8;"></div>
<div class="a" style="left:537.5px;top:345.8px;width:94px;height:18.3px;background:#5182d8;"></div>
<div class="a" style="left:537.5px;top:365.5px;width:94px;height:18.3px;background:#5182d8;"></div>
<div class="a" style="left:537.5px;top:385.3px;width:94px;height:18.3px;background:#5182d8;"></div>
<svg width="1200" height="630" style="left:0;top:0"><rect x="355" y="324.8" width="421" height="1.6" fill="#c6c6c6"/><rect x="355" y="344.4" width="421" height="1.6" fill="#c6c6c6"/><rect x="355" y="364.0" width="421" height="1.6" fill="#c6c6c6"/><rect x="355" y="383.6" width="421" height="1.6" fill="#c6c6c6"/><rect x="355" y="403.4" width="421" height="1.6" fill="#c6c6c6"/><rect x="355" y="424.1" width="421" height="1.6" fill="#c6c6c6"/><rect x="355" y="444.4" width="421" height="1.6" fill="#c6c6c6"/><rect x="355" y="325" width="1.6" height="121" fill="#c6c6c6"/><rect x="536.2" y="325" width="1.3" height="80" fill="#c6c6c6"/><rect x="774.6" y="312" width="1.6" height="134" fill="#c6c6c6"/><rect x="240.5" y="325" width="1.3" height="121" fill="#c6c6c6"/><rect x="241.5" y="344.6" width="114" height="1.6" fill="#b9cdf0"/><rect x="241.5" y="364.3" width="114" height="1.6" fill="#b9cdf0"/><rect x="241.5" y="384.1" width="114" height="1.6" fill="#b9cdf0"/><rect x="241.5" y="403.8" width="114" height="1.6" fill="#b9cdf0"/><rect x="241.5" y="423.6" width="114" height="1.6" fill="#b9cdf0"/><rect x="537.5" y="344.6" width="94" height="1.6" fill="#b9cdf0"/><rect x="537.5" y="364.3" width="94" height="1.6" fill="#b9cdf0"/><rect x="537.5" y="384.1" width="94" height="1.6" fill="#b9cdf0"/></svg>
<span class="a t" style="left:247.90px;top:332.13px;font-family:'Liberation Sans',sans-serif;font-size:10px;line-height:10px;font-weight:bold;color:#fff;letter-spacing:0.000px;">Contact Name:</span>
<span class="a t" style="left:366.70px;top:331.79px;font-family:'Liberation Sans',sans-serif;font-size:9.7px;line-height:9.7px;font-weight:normal;color:#333;letter-spacing:0.000px;letter-spacing:-0.35px">[Suppliers.ContactName]</span>
<span class="a t" style="left:247.90px;top:351.94px;font-family:'Liberation Sans',sans-serif;font-size:10px;line-height:10px;font-weight:bold;color:#fff;letter-spacing:0.000px;">Contact Title:</span>
<span class="a t" style="left:366.70px;top:351.59px;font-family:'Liberation Sans',sans-serif;font-size:9.7px;line-height:9.7px;font-weight:normal;color:#333;letter-spacing:0.000px;letter-spacing:-0.35px">[Suppliers.ContactTitle]</span>
<span class="a t" style="left:247.90px;top:371.63px;font-family:'Liberation Sans',sans-serif;font-size:10px;line-height:10px;font-weight:bold;color:#fff;letter-spacing:0.000px;">Phone:</span>
<span class="a t" style="left:366.70px;top:371.29px;font-family:'Liberation Sans',sans-serif;font-size:9.7px;line-height:9.7px;font-weight:normal;color:#333;letter-spacing:0.000px;letter-spacing:-0.35px">[Suppliers.Phone]</span>
<span class="a t" style="left:247.90px;top:391.44px;font-family:'Liberation Sans',sans-serif;font-size:10px;line-height:10px;font-weight:bold;color:#fff;letter-spacing:0.000px;">Fax:</span>
<span class="a t" style="left:366.70px;top:391.09px;font-family:'Liberation Sans',sans-serif;font-size:9.7px;line-height:9.7px;font-weight:normal;color:#333;letter-spacing:0.000px;letter-spacing:-0.35px">[Suppliers.Fax]</span>
<span class="a t" style="left:247.90px;top:411.13px;font-family:'Liberation Sans',sans-serif;font-size:10px;line-height:10px;font-weight:bold;color:#fff;letter-spacing:0.000px;">Home Page:</span>
<span class="a t" style="left:366.70px;top:410.79px;font-family:'Liberation Sans',sans-serif;font-size:9.7px;line-height:9.7px;font-weight:normal;color:#333;letter-spacing:0.000px;letter-spacing:-0.35px">[Suppliers.HomePage]</span>
<span class="a t" style="left:247.90px;top:430.94px;font-family:'Liberation Sans',sans-serif;font-size:10px;line-height:10px;font-weight:bold;color:#fff;letter-spacing:0.000px;">Address:</span>
<span class="a t" style="left:366.70px;top:430.59px;font-family:'Liberation Sans',sans-serif;font-size:9.7px;line-height:9.7px;font-weight:normal;color:#333;letter-spacing:0.000px;letter-spacing:-0.35px">[Suppliers.Address]</span>
<span class="a t" style="left:543.00px;top:332.13px;font-family:'Liberation Sans',sans-serif;font-size:10px;line-height:10px;font-weight:bold;color:#fff;letter-spacing:0.000px;">Country:</span>
<span class="a t" style="left:642.30px;top:331.79px;font-family:'Liberation Sans',sans-serif;font-size:9.7px;line-height:9.7px;font-weight:normal;color:#333;letter-spacing:0.000px;letter-spacing:-0.35px">[Suppliers.Country]</span>
<span class="a t" style="left:543.00px;top:351.94px;font-family:'Liberation Sans',sans-serif;font-size:10px;line-height:10px;font-weight:bold;color:#fff;letter-spacing:0.000px;">Region:</span>
<span class="a t" style="left:642.30px;top:351.59px;font-family:'Liberation Sans',sans-serif;font-size:9.7px;line-height:9.7px;font-weight:normal;color:#333;letter-spacing:0.000px;letter-spacing:-0.35px">[Suppliers.Region]</span>
<span class="a t" style="left:543.00px;top:371.63px;font-family:'Liberation Sans',sans-serif;font-size:10px;line-height:10px;font-weight:bold;color:#fff;letter-spacing:0.000px;">City:</span>
<span class="a t" style="left:642.30px;top:371.29px;font-family:'Liberation Sans',sans-serif;font-size:9.7px;line-height:9.7px;font-weight:normal;color:#333;letter-spacing:0.000px;letter-spacing:-0.35px">[Suppliers.City]</span>
<span class="a t" style="left:543.00px;top:391.44px;font-family:'Liberation Sans',sans-serif;font-size:10px;line-height:10px;font-weight:bold;color:#fff;letter-spacing:0.000px;">Postal Code:</span>
<span class="a t" style="left:642.30px;top:391.09px;font-family:'Liberation Sans',sans-serif;font-size:9.7px;line-height:9.7px;font-weight:normal;color:#333;letter-spacing:0.000px;letter-spacing:-0.35px">[Suppliers.PostalCode]</span>
<div class="a" style="left:241.5px;top:466.3px;width:115.10000000000002px;height:17.6px;background:#5182d8;"></div>
<div class="a" style="left:241.5px;top:484.6px;width:115.10000000000002px;height:21px;background:#c6ddf9;"></div>
<span class="a t" style="left:266.40px;top:471.74px;font-family:'Liberation Sans',sans-serif;font-size:10px;line-height:10px;font-weight:bold;color:#fff;letter-spacing:0.000px;">Product Name</span>
<div class="a" style="left:357.8px;top:466.3px;width:81.39999999999996px;height:17.6px;background:#5182d8;"></div>
<div class="a" style="left:357.8px;top:484.6px;width:81.39999999999996px;height:21px;background:#c6ddf9;"></div>
<span class="a t" style="left:373.22px;top:471.74px;font-family:'Liberation Sans',sans-serif;font-size:10px;line-height:10px;font-weight:bold;color:#fff;letter-spacing:0.000px;">Product ID</span>
<div class="a" style="left:440.4px;top:466.3px;width:73.39999999999996px;height:17.6px;background:#5182d8;"></div>
<div class="a" style="left:440.4px;top:484.6px;width:73.39999999999996px;height:21px;background:#c6ddf9;"></div>
<span class="a t" style="left:455.52px;top:471.74px;font-family:'Liberation Sans',sans-serif;font-size:10px;line-height:10px;font-weight:bold;color:#fff;letter-spacing:0.000px;">Category</span>
<div class="a" style="left:515.0px;top:466.3px;width:95.40000000000002px;height:17.6px;background:#5182d8;"></div>
<div class="a" style="left:515.0px;top:484.6px;width:95.40000000000002px;height:21px;background:#c6ddf9;"></div>
<span class="a t" style="left:522.34px;top:471.74px;font-family:'Liberation Sans',sans-serif;font-size:10px;line-height:10px;font-weight:bold;color:#fff;letter-spacing:0.000px;">Quantity per Unit</span>
<div class="a" style="left:611.6px;top:466.3px;width:81.40000000000002px;height:17.6px;background:#5182d8;"></div>
<div class="a" style="left:611.6px;top:484.6px;width:81.40000000000002px;height:21px;background:#c6ddf9;"></div>
<span class="a t" style="left:628.96px;top:471.74px;font-family:'Liberation Sans',sans-serif;font-size:10px;line-height:10px;font-weight:bold;color:#fff;letter-spacing:0.000px;">Unit Price</span>
<div class="a" style="left:694.2px;top:466.3px;width:81.50000000000004px;height:17.6px;background:#5182d8;"></div>
<div class="a" style="left:694.2px;top:484.6px;width:81.50000000000004px;height:21px;background:#c6ddf9;"></div>
<span class="a t" style="left:702.93px;top:471.74px;font-family:'Liberation Sans',sans-serif;font-size:10px;line-height:10px;font-weight:bold;color:#fff;letter-spacing:0.000px;">Discontinued</span>
<div class="a" style="left:241px;top:505.8px;width:535px;height:1.8px;background:#c8c8c8;"></div>
<div class="a" style="left:242.7px;top:484px;width:113.40000000000003px;height:22px;overflow:hidden">
<span class="a t" style="left:1.40px;top:7.04px;font-family:'Liberation Sans',sans-serif;font-size:10px;line-height:10px;font-weight:bold;color:#222;letter-spacing:0.000px;letter-spacing:-0.3px">[Suppliers.SuppliersProducts.ProductName]</span>
</div>
<div class="a" style="left:357.8px;top:484px;width:80.89999999999998px;height:22px;overflow:hidden">
<span class="a t" style="left:2.20px;top:7.04px;font-family:'Liberation Sans',sans-serif;font-size:10px;line-height:10px;font-weight:normal;color:#333;letter-spacing:0.000px;letter-spacing:-0.5px">[Suppliers.SuppliersProducts.ProductID]</span>
</div>
<div class="a" style="left:440.4px;top:484px;width:72.89999999999998px;height:22px;overflow:hidden">
<span class="a t" style="left:2.10px;top:7.04px;font-family:'Liberation Sans',sans-serif;font-size:10px;line-height:10px;font-weight:normal;color:#333;letter-spacing:0.000px;letter-spacing:-0.5px">[Suppliers.SuppliersProducts.CategoryID]</span>
</div>
<div class="a" style="left:515.0px;top:484px;width:94.89999999999998px;height:22px;overflow:hidden">
<span class="a t" style="left:1.80px;top:7.04px;font-family:'Liberation Sans',sans-serif;font-size:10px;line-height:10px;font-weight:normal;color:#333;letter-spacing:0.000px;letter-spacing:-0.5px">[Suppliers.SuppliersProducts.QuantityPerUnit]</span>
</div>
<div class="a" style="left:611.6px;top:484px;width:80.89999999999998px;height:22px;overflow:hidden">
<span class="a t" style="left:1.80px;top:7.04px;font-family:'Liberation Sans',sans-serif;font-size:10px;line-height:10px;font-weight:normal;color:#333;letter-spacing:0.000px;letter-spacing:-0.5px">[Suppliers.SuppliersProducts.UnitPrice]</span>
</div>
<div class="a" style="left:728px;top:490px;width:12.7px;height:12.6px;background:#fff;border:1px solid #6a6a6a;border-radius:1px"></div>
<div class="a" style="left:241px;top:507px;width:116.5px;height:69px;background:#fff;"></div>
<div class="a" style="left:241px;top:523.7px;width:116.5px;height:1.8px;background:#c0c0c0;"></div>
<div class="a" style="left:241px;top:541.5px;width:116.5px;height:1.8px;background:#c0c0c0;"></div>
<div class="a" style="left:241px;top:558.4px;width:116.5px;height:1.8px;background:#c0c0c0;"></div>
<div class="a" style="left:356.6px;top:507px;width:1.2px;height:69px;background:#c8c8c8;"></div>
<div class="a" style="left:357.6px;top:507.4px;width:95.79999999999995px;height:16.2px;background:#f39c1e;"></div>
<span class="a t" style="left:387.88px;top:512.04px;font-family:'Liberation Sans',sans-serif;font-size:10px;line-height:10px;font-weight:bold;color:#fff;letter-spacing:0.000px;">OrderID</span>
<div class="a" style="left:454.4px;top:507.4px;width:102.39999999999998px;height:16.2px;background:#f39c1e;"></div>
<span class="a t" style="left:485.82px;top:512.04px;font-family:'Liberation Sans',sans-serif;font-size:10px;line-height:10px;font-weight:bold;color:#fff;letter-spacing:0.000px;">Quantity</span>
<div class="a" style="left:557.8px;top:507.4px;width:102.20000000000005px;height:16.2px;background:#f39c1e;"></div>
<span class="a t" style="left:588.01px;top:512.04px;font-family:'Liberation Sans',sans-serif;font-size:10px;line-height:10px;font-weight:bold;color:#fff;letter-spacing:0.000px;">Discount</span>
<div class="a" style="left:661px;top:507.4px;width:114.70000000000005px;height:16.2px;background:#f39c1e;"></div>
<span class="a t" style="left:696.44px;top:512.04px;font-family:'Liberation Sans',sans-serif;font-size:10px;line-height:10px;font-weight:bold;color:#fff;letter-spacing:0.000px;">Sub Total</span>
<div class="a" style="left:357.5px;top:524.2px;width:418.2px;height:18.6px;background:#efefef;border-top:1px solid #c8c8c8;border-left:1px solid #c8c8c8"></div>
<div class="a" style="left:453px;top:524.6px;width:1px;height:18px;background:#d6d6d6;"></div>
<span class="a t" style="left:365.90px;top:530.63px;font-family:'Liberation Sans',sans-serif;font-size:10px;line-height:10px;font-weight:bold;color:#a3a3a3;letter-spacing:0.000px;">Unit price:</span>
<div class="a" style="left:454px;top:525px;width:321.5px;height:17.5px;overflow:hidden">
<span class="a t" style="left:1.60px;top:5.64px;font-family:'Liberation Sans',sans-serif;font-size:10px;line-height:10px;font-weight:bold;color:#a3a3a3;letter-spacing:0.000px;">[Suppliers.SuppliersProducts.ProductsOrder_x0020_Details.UnitPrice]</span>
</div>
<div class="a" style="left:357.6px;top:542.6px;width:95.79999999999995px;height:16.6px;background:#fff;border:1.4px solid #555;border-right:none;"></div>
<div class="a" style="left:453.4px;top:542.6px;width:103.39999999999998px;height:16.6px;background:#fff;border:1.4px solid #555;border-right:none;"></div>
<div class="a" style="left:556.8px;top:542.6px;width:103.20000000000005px;height:16.6px;background:#fff;border:1.4px solid #555;border-right:none;"></div>
<div class="a" style="left:660px;top:542.6px;width:117.10000000000005px;height:16.6px;background:#fff;border:1.4px solid #555;"></div>
<div class="a" style="left:359.0px;top:544px;width:94.39999999999998px;height:14px;overflow:hidden">
<span class="a t" style="left:1.60px;top:3.41px;font-family:'Liberation Sans',sans-serif;font-size:10.5px;line-height:10.5px;font-weight:normal;color:#333;letter-spacing:0.000px;letter-spacing:-0.08px">[Suppliers.SuppliersProducts.ProductsOrder_x0020_Details.OrderID]</span>
</div>
<div class="a" style="left:454.79999999999995px;top:544px;width:102.0px;height:14px;overflow:hidden">
<span class="a t" style="left:1.00px;top:3.41px;font-family:'Liberation Sans',sans-serif;font-size:10.5px;line-height:10.5px;font-weight:normal;color:#333;letter-spacing:0.000px;letter-spacing:-0.08px">[Suppliers.SuppliersProducts.ProductsOrder_x0020_Details.Quantity]</span>
</div>
<div class="a" style="left:558.1999999999999px;top:544px;width:101.80000000000007px;height:14px;overflow:hidden">
<span class="a t" style="left:1.00px;top:3.41px;font-family:'Liberation Sans',sans-serif;font-size:10.5px;line-height:10.5px;font-weight:normal;color:#333;letter-spacing:0.000px;letter-spacing:-0.08px">[Suppliers.SuppliersProducts.ProductsOrder_x0020_Details.Discount]</span>
</div>
<div class="a" style="left:661.4px;top:544px;width:114.30000000000007px;height:14px;overflow:hidden">
<span class="a t" style="left:0.40px;top:3.41px;font-family:'Liberation Sans',sans-serif;font-size:10.5px;line-height:10.5px;font-weight:normal;color:#333;letter-spacing:0.000px;letter-spacing:-0.08px">[Suppliers.SuppliersProducts.ProductsOrder_x0020_Details.SubTotal]</span>
</div>
<div class="a" style="left:357.5px;top:559.5px;width:418.2px;height:16.3px;background:transparent;border-left:1px solid #f3d6ad;border-bottom:1px solid #f3d6ad;border-top:1px solid #f3d6ad"></div>
<span class="a t" style="left:365.20px;top:564.33px;font-family:'Liberation Sans',sans-serif;font-size:10px;line-height:10px;font-weight:bold;color:#1f1f1f;letter-spacing:0.000px;">Total by unit price:</span>
<div class="a" style="left:661px;top:560px;width:114.5px;height:16px;overflow:hidden">
<span class="a t" style="left:0.60px;top:4.33px;font-family:'Liberation Sans',sans-serif;font-size:10px;line-height:10px;font-weight:bold;color:#1f1f1f;letter-spacing:0.000px;letter-spacing:-0.3px">[Suppliers.SuppliersProducts.ProductsOrder_x0020_Details.SubTotal]</span>
</div>
<div class="a" style="left:241px;top:574.9px;width:535px;height:1.8px;background:#c0c0c0;"></div>
<div class="a" style="left:241px;top:576.5px;width:535px;height:15px;background:#c6ddf9;"></div>
<div class="a" style="left:659.6px;top:559.8px;width:116.2px;height:16.4px;background:transparent;border:1px solid #f1d5ac;border-left:none"></div>
<div class="a" style="left:659.4px;top:559.8px;width:1.4px;height:31.7px;background:#b8b8b8;"></div>
<span class="a t" style="left:247.80px;top:581.34px;font-family:'Liberation Sans',sans-serif;font-size:11px;line-height:11px;font-weight:bold;color:#161616;letter-spacing:-0.045px;">Grand total:</span>
<div class="a" style="left:661px;top:577px;width:114.5px;height:14.5px;overflow:hidden">
<span class="a t" style="left:0.60px;top:4.34px;font-family:'Liberation Sans',sans-serif;font-size:11px;line-height:11px;font-weight:bold;color:#161616;letter-spacing:0.000px;letter-spacing:-0.25px">[Suppliers.SuppliersProducts.ProductsOrder_x0020_Details.SubTotal]</span>
</div>
<svg width="1200" height="630" style="left:0;top:0"><path d="M241,598.3 H792" stroke="#555" stroke-width="1.5" stroke-dasharray="3.3,3.6"/></svg>
<div class="a" style="left:241px;top:610.4px;width:329px;height:14px;background:transparent;border:1px solid #c8c8c8;border-bottom:2px solid #c8c8c8"></div>
<span class="a t" style="left:244.00px;top:611.60px;font-family:'Liberation Serif',sans-serif;font-size:12px;line-height:12px;font-weight:bold;color:#111;letter-spacing:-0.529px;">[CompanyName]:</span>
<div class="a" style="left:241px;top:624.5px;width:123px;height:10px;background:transparent;border:1px solid #c8c8c8"></div>
<span class="a t" style="left:245.30px;top:627.19px;font-family:'Liberation Serif',sans-serif;font-size:11px;line-height:11px;font-weight:normal;color:#222;letter-spacing:0.000px;">{0} - {1}</span>
<div class="a" style="left:706.6px;top:610.4px;width:83.4px;height:13.4px;background:transparent;border:1px solid #c8c8c8"></div>
<span class="a t" style="right:413.20px;top:611.60px;font-family:'Liberation Serif',sans-serif;font-size:12px;line-height:12px;font-weight:bold;color:#111;letter-spacing:0.000px;">Total:</span>
<div class="a" style="left:665.8px;top:624.3px;width:124.2px;height:10px;background:transparent;border:1px solid #c8c8c8"></div>
<span class="a t" style="right:438.00px;top:627.19px;font-family:'Liberation Serif',sans-serif;font-size:11px;line-height:11px;font-weight:normal;color:#222;letter-spacing:0.000px;">{0} - {1}</span>
<div class="a" style="left:873px;top:46px;width:322px;height:18px;background:#d0d0d0;"></div>
<div class="a" style="left:873px;top:64px;width:322px;height:566px;background:#fff;"></div>
<div class="a" style="left:1151px;top:105px;width:44px;height:525px;background:#d2d2d2;"></div>
<div class="a" style="left:873px;top:141px;width:278px;height:1px;background:#e6e6e6;"></div>
<div class="a" style="left:873px;top:177px;width:278px;height:156px;background:#f1f1f1;border-top:1px solid #e8e8e8"></div>
<div class="a" style="left:873px;top:368px;width:278px;height:262px;background:#f1f1f1;"></div>
<div class="a" style="left:1199px;top:0px;width:1px;height:630px;background:#c8c8c8;"></div>
<div class="a" style="left:1195px;top:46px;width:4px;height:584px;background:#fcfcfc;"></div>
<svg width="1200" height="630" style="left:0;top:0"><path d="M1183.6,52.6 L1187.4,56 L1183.6,59.4" fill="none" stroke="#333" stroke-width="1.3"/><path d="M1172.2,78.5 V76.5" stroke="#555" stroke-width="2.6" stroke-linecap="round" transform="rotate(0 1172.2 84.5)"/><path d="M1172.2,78.5 V76.5" stroke="#555" stroke-width="2.6" stroke-linecap="round" transform="rotate(45 1172.2 84.5)"/><path d="M1172.2,78.5 V76.5" stroke="#555" stroke-width="2.6" stroke-linecap="round" transform="rotate(90 1172.2 84.5)"/><path d="M1172.2,78.5 V76.5" stroke="#555" stroke-width="2.6" stroke-linecap="round" transform="rotate(135 1172.2 84.5)"/><path d="M1172.2,78.5 V76.5" stroke="#555" stroke-width="2.6" stroke-linecap="round" transform="rotate(180 1172.2 84.5)"/><path d="M1172.2,78.5 V76.5" stroke="#555" stroke-width="2.6" stroke-linecap="round" transform="rotate(225 1172.2 84.5)"/><path d="M1172.2,78.5 V76.5" stroke="#555" stroke-width="2.6" stroke-linecap="round" transform="rotate(270 1172.2 84.5)"/><path d="M1172.2,78.5 V76.5" stroke="#555" stroke-width="2.6" stroke-linecap="round" transform="rotate(315 1172.2 84.5)"/><circle cx="1172.2" cy="84.5" r="5.3" fill="none" stroke="#555" stroke-width="3.5"/><circle cx="1172.2" cy="84.5" r="2.1" fill="#555"/><path d="M1165.4,128.0 V131.79999999999998 A7,2.6 0 0 0 1179.4,131.79999999999998 V128.0 Z" fill="#555"/><path d="M1165.4,128.0 A7,2.6 0 0 0 1179.4,128.0" fill="none" stroke="#cfcfcf" stroke-width="0.9"/><path d="M1165.4,123.0 V126.8 A7,2.6 0 0 0 1179.4,126.8 V123.0 Z" fill="#555"/><path d="M1165.4,123.0 A7,2.6 0 0 0 1179.4,123.0" fill="none" stroke="#cfcfcf" stroke-width="0.9"/><path d="M1165.4,118.0 V121.8 A7,2.6 0 0 0 1179.4,121.8 V118.0 Z" fill="#555"/><path d="M1165.4,118.0 A7,2.6 0 0 0 1179.4,118.0" fill="none" stroke="#cfcfcf" stroke-width="0.9"/><ellipse cx="1172.4" cy="118.2" rx="7" ry="2.3" fill="#555"/><rect x="884" y="108.6" width="13.2" height="16" rx="1" fill="#5a5a5a"/><rect x="888" y="106.8" width="5.4" height="3" rx="0.8" fill="#5a5a5a" stroke="#fff" stroke-width="0.8"/><rect x="890.8" y="116.4" width="10" height="10.4" fill="#fff"/><rect x="891.8" y="117.2" width="8.4" height="3.8" fill="#5a5a5a"/><rect x="891.8" y="122" width="8.4" height="4" fill="#5a5a5a"/></svg>
<span class="a t" style="left:884.00px;top:79.70px;font-family:'Liberation Sans',sans-serif;font-size:8.5px;line-height:8.5px;font-weight:bold;color:#444;letter-spacing:0.070px;">PROPERTIES</span>
<div class="a" style="left:908px;top:105.5px;width:229px;height:22px;background:#f8f8f8;border:1px solid #dcdcdc"></div>
<span class="a t" style="left:916.50px;top:113.03px;font-family:'Liberation Sans',sans-serif;font-size:9.3px;line-height:9.3px;font-weight:normal;color:#333;letter-spacing:-0.045px;">Suppliers (XtraReport)</span>
<span class="a t" style="left:896.30px;top:155.00px;font-family:'Liberation Sans',sans-serif;font-size:8.5px;line-height:8.5px;font-weight:bold;color:#333;letter-spacing:0.136px;">ACTIONS</span>
<span class="a t" style="left:896.30px;top:347.50px;font-family:'Liberation Sans',sans-serif;font-size:8.5px;line-height:8.5px;font-weight:bold;color:#333;letter-spacing:0.098px;">APPEARANCE</span>
<span class="a t" style="left:897.60px;top:542.30px;font-family:'Liberation Sans',sans-serif;font-size:8.5px;line-height:8.5px;font-weight:bold;color:#333;letter-spacing:0.015px;">FONT</span>
<span class="a t" style="left:897.60px;top:607.50px;font-family:'Liberation Sans',sans-serif;font-size:8.5px;line-height:8.5px;font-weight:bold;color:#333;letter-spacing:0.175px;">PADDING</span>
<span class="a t" style="left:884.70px;top:248.93px;font-family:'Liberation Sans',sans-serif;font-size:9.3px;line-height:9.3px;font-weight:bold;color:#333;letter-spacing:-0.042px;">Data Source</span>
<div class="a" style="left:975.5px;top:241.6px;width:156px;height:21.8px;background:#f9f9f9;border:1px solid #dadada"></div>
<span class="a t" style="left:984.50px;top:248.93px;font-family:'Liberation Sans',sans-serif;font-size:9.3px;line-height:9.3px;font-weight:normal;color:#333;letter-spacing:-0.045px;">dsMasterDetail1</span>
<div class="a" style="left:1136.5px;top:247.89999999999998px;width:7.8px;height:7.6px;background:#fff;border:1px solid #d8d8d8"></div>
<span class="a t" style="left:884.70px;top:281.53px;font-family:'Liberation Sans',sans-serif;font-size:9.3px;line-height:9.3px;font-weight:bold;color:#333;letter-spacing:0.201px;">Data Member</span>
<div class="a" style="left:975.5px;top:273.8px;width:156px;height:21.8px;background:#f9f9f9;border:1px solid #dadada"></div>
<span class="a t" style="left:984.50px;top:281.53px;font-family:'Liberation Sans',sans-serif;font-size:9.3px;line-height:9.3px;font-weight:normal;color:#333;letter-spacing:-0.120px;">0.Suppliers</span>
<div class="a" style="left:1136.5px;top:280.5px;width:7.8px;height:7.6px;background:#fff;border:1px solid #d8d8d8"></div>
<span class="a t" style="left:884.70px;top:313.73px;font-family:'Liberation Sans',sans-serif;font-size:9.3px;line-height:9.3px;font-weight:normal;color:#3a3a3a;letter-spacing:-0.011px;">Measure Units</span>
<div class="a" style="left:975.5px;top:306.3px;width:156px;height:21.8px;background:#f9f9f9;border:1px solid #dadada"></div>
<span class="a t" style="left:984.50px;top:313.73px;font-family:'Liberation Sans',sans-serif;font-size:9.3px;line-height:9.3px;font-weight:normal;color:#333;letter-spacing:0.063px;">Hundredths of an Inch</span>
<div class="a" style="left:1136.5px;top:312.7px;width:7.8px;height:7.6px;background:#e8e8e8;border:1px solid #dcdcdc"></div>
<span class="a t" style="left:884.70px;top:380.73px;font-family:'Liberation Sans',sans-serif;font-size:9.3px;line-height:9.3px;font-weight:normal;color:#3a3a3a;letter-spacing:0.049px;">Background Color</span>
<div class="a" style="left:975.5px;top:373.4px;width:156px;height:21.8px;background:#f9f9f9;border:1px solid #dadada"></div>
<span class="a t" style="left:1010.70px;top:380.73px;font-family:'Liberation Sans',sans-serif;font-size:9.3px;line-height:9.3px;font-weight:normal;color:#333;letter-spacing:-0.137px;">rgba(0, 0, 0, 0)</span>
<div class="a" style="left:1136.5px;top:379.7px;width:7.8px;height:7.6px;background:#e8e8e8;border:1px solid #dcdcdc"></div>
<span class="a t" style="left:884.70px;top:413.23px;font-family:'Liberation Sans',sans-serif;font-size:9.3px;line-height:9.3px;font-weight:normal;color:#3a3a3a;letter-spacing:0.007px;">Border Color</span>
<div class="a" style="left:975.5px;top:405.6px;width:156px;height:21.8px;background:#f9f9f9;border:1px solid #dadada"></div>
<span class="a t" style="left:1010.70px;top:413.23px;font-family:'Liberation Sans',sans-serif;font-size:9.3px;line-height:9.3px;font-weight:normal;color:#333;letter-spacing:-0.137px;">rgba(0, 0, 0, 1)</span>
<div class="a" style="left:1136.5px;top:412.2px;width:7.8px;height:7.6px;background:#e8e8e8;border:1px solid #dcdcdc"></div>
<span class="a t" style="left:884.70px;top:445.73px;font-family:'Liberation Sans',sans-serif;font-size:9.3px;line-height:9.3px;font-weight:normal;color:#3a3a3a;letter-spacing:-0.085px;">Border Dash Style</span>
<div class="a" style="left:975.5px;top:438.4px;width:156px;height:21.8px;background:#f9f9f9;border:1px solid #dadada"></div>
<span class="a t" style="left:984.50px;top:445.73px;font-family:'Liberation Sans',sans-serif;font-size:9.3px;line-height:9.3px;font-weight:normal;color:#333;letter-spacing:-0.058px;">Solid</span>
<div class="a" style="left:1136.5px;top:444.7px;width:7.8px;height:7.6px;background:#e8e8e8;border:1px solid #dcdcdc"></div>
<span class="a t" style="left:884.70px;top:478.23px;font-family:'Liberation Sans',sans-serif;font-size:9.3px;line-height:9.3px;font-weight:normal;color:#3a3a3a;letter-spacing:0.120px;">Border Width</span>
<div class="a" style="left:975.5px;top:471.0px;width:156px;height:21.8px;background:#f9f9f9;border:1px solid #dadada"></div>
<span class="a t" style="left:984.50px;top:478.23px;font-family:'Liberation Sans',sans-serif;font-size:9.3px;line-height:9.3px;font-weight:normal;color:#333;letter-spacing:0.000px;">1</span>
<div class="a" style="left:1136.5px;top:477.2px;width:7.8px;height:7.6px;background:#e8e8e8;border:1px solid #dcdcdc"></div>
<span class="a t" style="left:884.70px;top:510.63px;font-family:'Liberation Sans',sans-serif;font-size:9.3px;line-height:9.3px;font-weight:normal;color:#3a3a3a;letter-spacing:-0.066px;">Borders</span>
<div class="a" style="left:1136.5px;top:509.6px;width:7.8px;height:7.6px;background:#e8e8e8;border:1px solid #dcdcdc"></div>
<span class="a t" style="left:884.70px;top:576.33px;font-family:'Liberation Sans',sans-serif;font-size:9.3px;line-height:9.3px;font-weight:normal;color:#3a3a3a;letter-spacing:0.070px;">Foreground Color</span>
<div class="a" style="left:975.5px;top:568.4px;width:156px;height:21.8px;background:#f9f9f9;border:1px solid #dadada"></div>
<span class="a t" style="left:1010.70px;top:576.33px;font-family:'Liberation Sans',sans-serif;font-size:9.3px;line-height:9.3px;font-weight:normal;color:#333;letter-spacing:-0.137px;">rgba(0, 0, 0, 1)</span>
<div class="a" style="left:1136.5px;top:575.3px;width:7.8px;height:7.6px;background:#e8e8e8;border:1px solid #dcdcdc"></div>
<svg width="1200" height="630" style="left:0;top:0"><rect x="987.6" y="377" width="14.2" height="14.6" fill="#fff"/><rect x="994.7" y="377" width="7.1" height="7.3" fill="#c8c8c8"/><rect x="987.6" y="384.3" width="7.1" height="7.3" fill="#c8c8c8"/><rect x="987.8" y="410.2" width="13.8" height="13.4" fill="#000"/><rect x="987.8" y="572.8" width="13.8" height="13.1" fill="#000"/><rect x="975.4" y="503.3" width="21.3" height="21" fill="#b4b4b4"/><rect x="979.7" y="507.5" width="12.6" height="12.4" fill="none" stroke="#7c7c7c" stroke-width="1" stroke-dasharray="2,1.4"/><rect x="1002.6" y="508.5" width="11.4" height="10.8" fill="none" stroke="#666" stroke-width="1.6"/><rect x="1041.2" y="507.6" width="12" height="11.6" fill="none" stroke="#8a8a8a" stroke-width="0.9" stroke-dasharray="2,1.4"/><path d="M1041.2,507 V519.8" stroke="#555" stroke-width="1.6"/><rect x="1062.8" y="507.6" width="12" height="11.6" fill="none" stroke="#8a8a8a" stroke-width="0.9" stroke-dasharray="2,1.4"/><path d="M1062.2,507.6 H1075.4" stroke="#555" stroke-width="1.6"/><rect x="1085.1" y="507.6" width="12" height="11.6" fill="none" stroke="#8a8a8a" stroke-width="0.9" stroke-dasharray="2,1.4"/><path d="M1097.2,507 V519.8" stroke="#555" stroke-width="1.6"/><rect x="1107.3" y="507.6" width="12" height="11.6" fill="none" stroke="#8a8a8a" stroke-width="0.9" stroke-dasharray="2,1.4"/><path d="M1106.6,519.4 H1120" stroke="#555" stroke-width="1.6"/></svg>
<svg width="1200" height="630" style="left:0;top:0"><path d="M1123.1,114.7 H1131.5 L1127.3,119.3 Z" fill="#111"/><path d="M1116.8999999999999,250.1 H1125.3 L1121.1,254.70000000000002 Z" fill="#111"/><path d="M1116.8999999999999,282.3 H1125.3 L1121.1,286.90000000000003 Z" fill="#111"/><path d="M1116.8999999999999,314.8 H1125.3 L1121.1,319.40000000000003 Z" fill="#111"/><path d="M1116.8999999999999,381.7 H1125.3 L1121.1,386.3 Z" fill="#111"/><path d="M1116.8999999999999,414.2 H1125.3 L1121.1,418.8 Z" fill="#111"/><path d="M1116.8999999999999,446.8 H1125.3 L1121.1,451.40000000000003 Z" fill="#111"/><path d="M1116.8999999999999,577.1 H1125.3 L1121.1,581.6999999999999 Z" fill="#111"/><path d="M1117.1,480 H1125.1 L1121.1,476 Z M1117.1,483.5 H1125.1 L1121.1,487.5 Z" fill="#111"/><path d="M884.7,155.8 H890.6 L887.65,160.8 Z" fill="#333"/><path d="M884.7,348.4 H890.6 L887.65,353.3 Z" fill="#333"/><path d="M885.2,542.9 V548.3 L890.4,545.6 Z" fill="#333"/><path d="M885.2,608 V613.4 L890.4,610.7 Z" fill="#333"/><rect x="881.2" y="183.5" width="1.8" height="2.4" fill="#c9c9c9"/><rect x="884.2" y="183.5" width="4.8" height="2.4" fill="#c9c9c9"/><rect x="890" y="183.5" width="1.6" height="2.4" fill="#c9c9c9"/><rect x="881.2" y="186.5" width="1.8" height="7.5" fill="#c9c9c9"/><rect x="884.2" y="186.5" width="4.8" height="7.5" fill="#d9d9d9"/><rect x="890" y="186.5" width="1.6" height="7.5" fill="#c9c9c9"/><rect x="881.2" y="194.5" width="1.8" height="2" fill="#c9c9c9"/><rect x="884.2" y="194.5" width="4.8" height="2" fill="#c9c9c9"/><rect x="890" y="194.5" width="1.6" height="2" fill="#c9c9c9"/><rect x="911" y="184" width="1" height="12.6" fill="#c9c9c9"/><rect x="920" y="184" width="1" height="12.6" fill="#c9c9c9"/><rect x="913.5" y="183.4" width="5" height="1" fill="#c9c9c9"/><rect x="913.5" y="186.5" width="5" height="1.1" fill="#d9d9d9"/><rect x="913.5" y="189.8" width="5" height="1.1" fill="#d9d9d9"/><rect x="913.5" y="192.8" width="5" height="1.1" fill="#d9d9d9"/><rect x="913.5" y="195.6" width="5" height="1.1" fill="#d9d9d9"/><rect x="913.5" y="189" width="5" height="2.4" fill="#c9c9c9"/><rect x="940.2" y="183.5" width="1.6" height="13" fill="#9a9a9a"/><rect x="950" y="183.5" width="1.6" height="13" fill="#9a9a9a"/><rect x="943" y="183.5" width="6" height="1.6" fill="#9a9a9a"/><rect x="943" y="195" width="6" height="1.6" fill="#9a9a9a"/><rect x="943" y="186.8" width="6" height="2.4" fill="#5a5a5a"/><rect x="943" y="190.2" width="6" height="4" fill="#aaaaaa"/><rect x="971" y="183.5" width="6" height="2.6" fill="#5a5a5a"/><rect x="973.4" y="187.8" width="6.4" height="2.6" fill="#c9c9c9"/><rect x="973.4" y="190.4" width="6.4" height="1" fill="#9a9a9a"/><rect x="971" y="193.5" width="6" height="2.6" fill="#9a9a9a"/><rect x="1001" y="183.5" width="10.3" height="13" fill="#c6c6c6"/><rect x="1003.2" y="186.5" width="5.8" height="1" fill="#e8e8e8"/><rect x="1003.2" y="189.5" width="5.8" height="1" fill="#e8e8e8"/><rect x="1003.2" y="192.5" width="5.8" height="1" fill="#e8e8e8"/><rect x="1031.2" y="184.4" width="10.4" height="12" rx="0.8" fill="#5a5a5a"/><rect x="1034.2" y="183.2" width="4.4" height="2" fill="#5a5a5a"/><rect x="1033.4" y="187.5" width="6" height="1.1" fill="#ddd"/><rect x="1033.4" y="190" width="6" height="1.1" fill="#ddd"/><rect x="1033.4" y="192.5" width="6" height="1.1" fill="#ddd"/><rect x="1061" y="183.5" width="6" height="2.6" fill="#9a9a9a"/><rect x="1063.4" y="187.8" width="6.4" height="2.6" fill="#c9c9c9"/><rect x="1063.4" y="190.4" width="6.4" height="1" fill="#c9c9c9"/><rect x="1061" y="193.5" width="6" height="2.6" fill="#5a5a5a"/><rect x="1090.4" y="184" width="1.2" height="12.6" fill="#9a9a9a"/><rect x="1100" y="184" width="1.2" height="12.6" fill="#9a9a9a"/><rect x="1092.6" y="183.3" width="6" height="1" fill="#9a9a9a"/><rect x="1092.6" y="186.2" width="6" height="1.6" fill="#aaa"/><rect x="1092.6" y="189" width="6" height="1.6" fill="#aaa"/><rect x="1092.6" y="191.8" width="6" height="2.2" fill="#5a5a5a"/><rect x="1092.6" y="195" width="6" height="1.2" fill="#9a9a9a"/><rect x="1120.2" y="183.5" width="1.4" height="13" fill="#9a9a9a"/><rect x="1130" y="183.5" width="1.4" height="13" fill="#9a9a9a"/><rect x="1122.6" y="183.5" width="6.6" height="1.6" fill="#9a9a9a"/><rect x="1122.6" y="195" width="6.6" height="1.6" fill="#9a9a9a"/><rect x="1122.6" y="186.3" width="6.6" height="3.5" fill="#aaaaaa"/><rect x="1122.6" y="190.4" width="6.6" height="2.4" fill="#5a5a5a"/><rect x="881.2" y="213.5" width="1.8" height="2.2" fill="#c9c9c9"/><rect x="884.2" y="213.5" width="4.8" height="2.2" fill="#c9c9c9"/><rect x="890" y="213.5" width="1.6" height="2.2" fill="#c9c9c9"/><rect x="881.2" y="216.5" width="1.8" height="7" fill="#c9c9c9"/><rect x="884.2" y="216.5" width="4.8" height="7" fill="#d9d9d9"/><rect x="890" y="216.5" width="1.6" height="7" fill="#c9c9c9"/><rect x="881.2" y="224" width="1.8" height="2" fill="#c9c9c9"/><rect x="884.2" y="224" width="4.8" height="2" fill="#c9c9c9"/><rect x="890" y="224" width="1.6" height="2" fill="#c9c9c9"/><rect x="884.2" y="224" width="4.8" height="2" fill="#9a9a9a"/><rect x="909.6" y="214.9" width="6.4" height="3.6" fill="#d6d6d6"/><rect x="913.8" y="220" width="7.8" height="4.2" fill="#c2c2c2"/></svg>
